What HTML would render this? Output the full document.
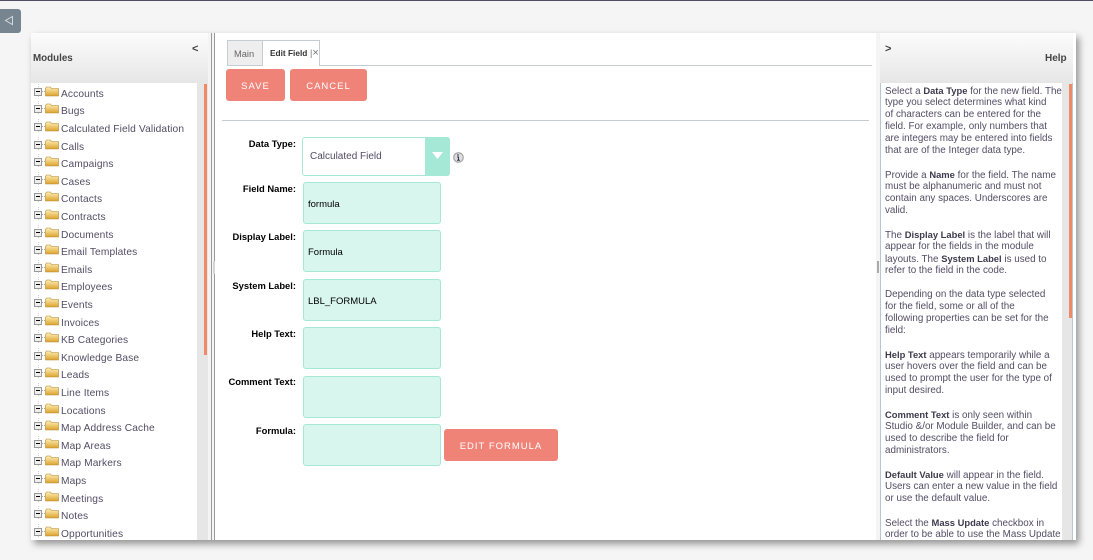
<!DOCTYPE html>
<html><head><meta charset="utf-8"><style>
html,body{margin:0;padding:0;width:1093px;height:560px;overflow:hidden;background:#f5f5f5;font-family:"Liberation Sans",sans-serif}
*{box-sizing:border-box}
.a{position:absolute}
.panelhead{background:linear-gradient(#fcfcfc,#e6e6e6)}
.m{position:absolute;left:61px;margin-top:2px;font-size:10.2px;line-height:12px;color:#534d64;white-space:nowrap;letter-spacing:.12px}
.l{position:absolute;right:797px;margin-top:1px;font-size:9.4px;line-height:12px;font-weight:bold;color:#000;white-space:nowrap}
.i{position:absolute;left:303px;width:138px;height:42px;background:#d8f5ee;border:1px solid #a5e8d6;border-radius:3px;font-size:9.500px;color:#000;padding-left:4px;line-height:43px}
.b{position:absolute;background:#f08377;border-radius:3px;color:#fff;font-size:9.500px;letter-spacing:1px;text-align:center;height:32px;line-height:36px}
.h{position:absolute;left:885px;margin-top:1px;font-size:9.85px;line-height:12px;color:#534d64;white-space:nowrap}
.h b{color:#3e3a4c;font-size:9.400px}
</style></head><body>
<div class="a" style="left:0;top:0;width:1093px;height:1px;background:#534d64"></div>
<div class="a" style="left:0;top:9px;width:21px;height:24px;background:#778591;border-radius:0 3px 3px 0"></div>
<svg class="a" style="left:4px;top:15px" width="10" height="12"><path d="M8.500 1.500v8L1.500 5.500z" fill="none" stroke="#d5dadd" stroke-width="1"/></svg>

<div class="a" style="left:31px;top:33px;width:1045px;height:507px;background:#fff;box-shadow:3px 4px 7px rgba(0,0,0,.4)"></div>

<!-- left panel -->
<div class="a panelhead" style="left:31px;top:33px;width:177px;height:50px"></div>
<div class="a" style="left:33px;top:53px;font-size:9.800px;line-height:12px;font-weight:bold;color:#444">Modules</div>
<div class="a" style="left:192px;top:43px;font-size:11px;line-height:12px;font-weight:bold;color:#444">&lt;</div>
<div class="a" style="left:197px;top:83px;width:11px;height:457px;background:#e6e6e6"></div>
<div class="a" style="left:204px;top:84px;width:3px;height:271px;background:#f08a66"></div>
<div class="a" style="left:208px;top:33px;width:3px;height:507px;background:#f4f4f4"></div>
<div class="a" style="left:211px;top:33px;width:1px;height:507px;background:#9a9a9a"></div>
<div class="a" style="left:214px;top:33px;width:1px;height:507px;background:#9a9a9a"></div>
<div class="a" style="left:212px;top:33px;width:2px;height:507px;background:#f5f5f5"></div>
<div class="a" style="left:213px;top:261px;width:2px;height:13px;background:#d5d5d5"></div>

<!-- tree -->
<svg class="a" style="left:31px;top:84px" width="34" height="456">
<defs>
<linearGradient id="fo" x1="0" y1="0" x2="0" y2="1"><stop offset="0" stop-color="#fdf0b8"/><stop offset="1" stop-color="#dca22c"/></linearGradient>
<g id="n"><path d="M7.500 -4v14" stroke="#ccc" stroke-dasharray="1 1"/><path d="M11 3.500h3" stroke="#aaa" stroke-dasharray="1 1"/><rect x="3.500" y="0.500" width="7" height="7" fill="#eee" stroke="#999"/><path d="M5 3.500h4" stroke="#000"/><path d="M14.500 0.500l1-1.500h4l1 1.500h7v7.500h-13z" fill="url(#fo)" stroke="#b08a30" stroke-width=".6"/></g>
</defs>
<use href="#n" y="4"/><use href="#n" y="21"/><use href="#n" y="39"/><use href="#n" y="57"/><use href="#n" y="74"/><use href="#n" y="92"/><use href="#n" y="109"/><use href="#n" y="127"/><use href="#n" y="145"/><use href="#n" y="162"/><use href="#n" y="180"/><use href="#n" y="197"/><use href="#n" y="215"/><use href="#n" y="233"/><use href="#n" y="250"/><use href="#n" y="268"/><use href="#n" y="285"/><use href="#n" y="303"/><use href="#n" y="321"/><use href="#n" y="338"/><use href="#n" y="356"/><use href="#n" y="373"/><use href="#n" y="391"/><use href="#n" y="409"/><use href="#n" y="426"/><use href="#n" y="444"/>
</svg>
<div class="m" style="top:87px">Accounts</div>
<div class="m" style="top:104px">Bugs</div>
<div class="m" style="top:122px">Calculated Field Validation</div>
<div class="m" style="top:140px">Calls</div>
<div class="m" style="top:157px">Campaigns</div>
<div class="m" style="top:175px">Cases</div>
<div class="m" style="top:192px">Contacts</div>
<div class="m" style="top:210px">Contracts</div>
<div class="m" style="top:228px">Documents</div>
<div class="m" style="top:245px">Email Templates</div>
<div class="m" style="top:263px">Emails</div>
<div class="m" style="top:280px">Employees</div>
<div class="m" style="top:298px">Events</div>
<div class="m" style="top:316px">Invoices</div>
<div class="m" style="top:333px">KB Categories</div>
<div class="m" style="top:351px">Knowledge Base</div>
<div class="m" style="top:368px">Leads</div>
<div class="m" style="top:386px">Line Items</div>
<div class="m" style="top:404px">Locations</div>
<div class="m" style="top:421px">Map Address Cache</div>
<div class="m" style="top:439px">Map Areas</div>
<div class="m" style="top:456px">Map Markers</div>
<div class="m" style="top:474px">Maps</div>
<div class="m" style="top:492px">Meetings</div>
<div class="m" style="top:509px">Notes</div>
<div class="m" style="top:527px">Opportunities</div>

<!-- tabs -->
<div class="a" style="left:227px;top:65px;width:645px;height:1px;background:#c5ccd3"></div>
<div class="a" style="left:227px;top:40px;width:36px;height:26px;background:#eee;border:1px solid #c5ccd3;border-right:none;font-size:9.300px;line-height:26px;color:#666;padding-left:6px">Main</div>
<div class="a" style="left:262px;top:40px;width:58px;height:26px;background:#fff;border:1px solid #c5ccd3;border-bottom:none;font-size:8.300px;font-weight:bold;line-height:25px;color:#333;padding-left:7px;white-space:nowrap">Edit Field</div>
<div class="a" style="left:310px;top:47px;font-size:9px;line-height:12px;color:#777">|<span style="font-size:11px">×</span></div>

<div class="b" style="left:226px;top:69px;width:59px;">SAVE</div>
<div class="b" style="left:290px;top:69px;width:77px;">CANCEL</div>
<div class="a" style="left:222px;top:120px;width:647px;height:1px;background:#c5ccd3"></div>

<!-- form -->
<div class="l" style="top:137px">Data Type:</div>
<div class="a" style="left:302px;top:137px;width:148px;height:39px;background:#fff;border:1px solid #a5e8d6;border-radius:3px;font-size:10px;line-height:38px;color:#534d64;padding-left:7px">Calculated Field</div>
<div class="a" style="left:425px;top:137px;width:25px;height:39px;background:#a5e8d6;border-radius:0 3px 3px 0"></div>
<svg class="a" style="left:432px;top:152px" width="12" height="8"><path d="M0 0h11L5.500 7z" fill="#fff"/></svg>
<svg class="a" style="left:453px;top:152px" width="11" height="11"><circle cx="5.500" cy="5.500" r="4.800" fill="#ddd" stroke="#999"/><path d="M4 3h2M5.500 3v.5M4 5h1.500v3M4 8.200h3" stroke="#335" fill="none"/></svg>

<div class="l" style="top:182px">Field Name:</div>
<div class="i" style="top:182px">formula</div>
<div class="l" style="top:230px">Display Label:</div>
<div class="i" style="top:230px">Formula</div>
<div class="l" style="top:279px">System Label:</div>
<div class="i" style="top:279px">LBL_FORMULA</div>
<div class="l" style="top:327px">Help Text:</div>
<div class="i" style="top:327px"></div>
<div class="l" style="top:375px">Comment Text:</div>
<div class="i" style="top:376px"></div>
<div class="l" style="top:424px">Formula:</div>
<div class="i" style="top:424px"></div>
<div class="b" style="left:444px;top:429px;width:114px;">EDIT FORMULA</div>

<!-- right separator -->
<div class="a" style="left:876px;top:33px;width:4px;height:507px;background:#f4f4f4"></div>
<div class="a" style="left:877px;top:261px;width:2px;height:12px;background:#aaa"></div>

<!-- help panel -->
<div class="a panelhead" style="left:880px;top:33px;width:193px;height:50px"></div>
<div class="a" style="left:885px;top:43px;font-size:11px;line-height:12px;font-weight:bold;color:#444">&gt;</div>
<div class="a" style="left:1045px;top:53px;font-size:10px;line-height:12px;font-weight:bold;color:#444">Help</div>
<div class="a" style="left:880px;top:83px;width:1px;height:457px;background:#b8c6d4"></div>
<div class="a" style="left:1062px;top:83px;width:11px;height:457px;background:#e6e6e6"></div>
<div class="a" style="left:1069px;top:84px;width:3px;height:234px;background:#f08a66"></div>
<div class="a" style="left:1072px;top:83px;width:1px;height:457px;background:#b8c6d4"></div>

<div class="h" style="top:84px">Select a <b>Data Type</b> for the new field. The</div>
<div class="h" style="top:96px">type you select determines what kind</div>
<div class="h" style="top:108px">of characters can be entered for the</div>
<div class="h" style="top:120px">field. For example, only numbers that</div>
<div class="h" style="top:132px">are integers may be entered into fields</div>
<div class="h" style="top:144px">that are of the Integer data type.</div>
<div class="h" style="top:168px">Provide a <b>Name</b> for the field. The name</div>
<div class="h" style="top:180px">must be alphanumeric and must not</div>
<div class="h" style="top:192px">contain any spaces. Underscores are</div>
<div class="h" style="top:204px">valid.</div>
<div class="h" style="top:228px">The <b>Display Label</b> is the label that will</div>
<div class="h" style="top:240px">appear for the fields in the module</div>
<div class="h" style="top:252px">layouts. The <b>System Label</b> is used to</div>
<div class="h" style="top:264px">refer to the field in the code.</div>
<div class="h" style="top:288px">Depending on the data type selected</div>
<div class="h" style="top:300px">for the field, some or all of the</div>
<div class="h" style="top:312px">following properties can be set for the</div>
<div class="h" style="top:324px">field:</div>
<div class="h" style="top:348px"><b>Help Text</b> appears temporarily while a</div>
<div class="h" style="top:360px">user hovers over the field and can be</div>
<div class="h" style="top:372px">used to prompt the user for the type of</div>
<div class="h" style="top:384px">input desired.</div>
<div class="h" style="top:408px"><b>Comment Text</b> is only seen within</div>
<div class="h" style="top:420px">Studio &amp;/or Module Builder, and can be</div>
<div class="h" style="top:432px">used to describe the field for</div>
<div class="h" style="top:444px">administrators.</div>
<div class="h" style="top:468px"><b>Default Value</b> will appear in the field.</div>
<div class="h" style="top:480px">Users can enter a new value in the field</div>
<div class="h" style="top:492px">or use the default value.</div>
<div class="h" style="top:516px">Select the <b>Mass Update</b> checkbox in</div>
<div class="h" style="top:528px;height:11px;overflow:hidden">order to be able to use the Mass Update</div>
</body></html>
